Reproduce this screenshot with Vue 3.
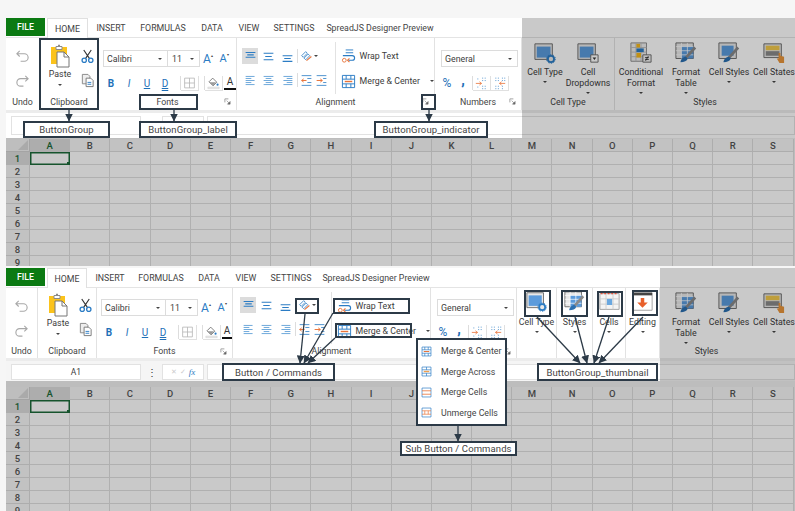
<template>
  <div class="page">
    <!-- icon sprite -->
    <svg class="sprite" aria-hidden="true">
      <symbol id="undo" viewBox="0 0 16 16"><path d="M5 2 2 5l3 3M2 5h8a4 4 0 0 1 0 8H6" fill="none" stroke="#a8a8a8" stroke-width="1.2"/></symbol>
      <symbol id="redo" viewBox="0 0 16 16"><path d="M11 3l3 3-3 3M14 6H6a4 4 0 0 0 0 8h3" fill="none" stroke="#a8a8a8" stroke-width="1.2"/></symbol>
      <symbol id="paste" viewBox="0 0 20 24">
        <path d="M1 3h16v17H1z" fill="#fbc31c"/>
        <path d="M6 2.5h6v3H6z" fill="#fff" stroke="#8a8a8a"/><path d="M8 .7h2v2H8z" fill="#8a8a8a"/>
        <path d="M7 8h7l5 5v10H7z" fill="#fff" stroke="#777"/><path d="M14 8v5h5" fill="none" stroke="#777"/>
      </symbol>
      <symbol id="cut" viewBox="0 0 16 16">
        <path d="M4 1l6 9M12 1 6 10" stroke="#333" stroke-width="1.2" fill="none"/>
        <circle cx="4.5" cy="12" r="2.3" fill="none" stroke="#2b7cc4" stroke-width="1.4"/>
        <circle cx="11.5" cy="12" r="2.3" fill="none" stroke="#2b7cc4" stroke-width="1.4"/>
      </symbol>
      <symbol id="copy" viewBox="0 0 16 16">
        <path d="M2.5 1.5h6l2 2v8h-8z" fill="#eee" stroke="#888"/>
        <path d="M6.5 5.5h5l2.5 2.5v6.500h-7.500z" fill="#fff" stroke="#777"/>
        <path d="M8 10h4M8 12h4" stroke="#2b7cc4"/>
      </symbol>
      <symbol id="borders" viewBox="0 0 16 16"><path d="M2 2h12v12H2zM8 2v12M2 8h12" fill="none" stroke="#b5b5b5"/></symbol>
      <symbol id="fill" viewBox="0 0 16 16"><path d="M7 2l5 5-4.500 4.500-5-5z" fill="#fff" stroke="#666"/><path d="M3 7h8L7.500 11z" fill="#999"/><path d="M1 13h14v2H1z" fill="#e8e8e8" stroke="#ccc" stroke-width=".5"/><circle cx="13" cy="10" r="1.300" fill="#2b7cc4"/></symbol>
      <symbol id="a-top" viewBox="0 0 16 16"><path d="M2 3h12M4 6h8M2 9h12" stroke="#2b7cc4" stroke-width="1.300"/></symbol>
      <symbol id="a-mid" viewBox="0 0 16 16"><path d="M2 4h12M4 8h8M2 12h12" stroke="#2b7cc4" stroke-width="1.300"/></symbol>
      <symbol id="a-bot" viewBox="0 0 16 16"><path d="M2 7h12M4 10.500h8M2 14h12" stroke="#2b7cc4" stroke-width="1.300"/></symbol>
      <symbol id="a-left" viewBox="0 0 16 16"><path d="M2 3h11M2 5.500h7M2 8h11M2 10.500h7M2 13h11" stroke="#5f9fd6" stroke-width="1.100"/></symbol>
      <symbol id="a-center" viewBox="0 0 16 16"><path d="M2 3h12M4.500 5.500h7M2 8h12M4.500 10.500h7M2 13h12" stroke="#5f9fd6" stroke-width="1.100"/></symbol>
      <symbol id="a-right" viewBox="0 0 16 16"><path d="M3 3h11M7 5.500h7M3 8h11M7 10.500h7M3 13h11" stroke="#5f9fd6" stroke-width="1.100"/></symbol>
      <symbol id="orient" viewBox="0 0 16 16"><path d="M2 7l5-5 2 2-5 5zM5 10l5-5 2 2-5 5z" fill="none" stroke="#2b7cc4"/><path d="M8 13l6-5" stroke="#e8743b" stroke-width="1.400"/></symbol>
      <symbol id="outdent" viewBox="0 0 16 16"><path d="M2 2h12M9 5.500h5M9 10.500h5M2 14h12" stroke="#2b7cc4"/><path d="M8 8H2M4.500 6 2 8l2.500 2" fill="none" stroke="#e8743b" stroke-width="1.200"/></symbol>
      <symbol id="indent" viewBox="0 0 16 16"><path d="M2 2h12M10 5.500h4M10 10.500h4M2 14h12" stroke="#2b7cc4"/><path d="M2 8h7M6.500 6 9 8l-2.500 2" fill="none" stroke="#e8743b" stroke-width="1.200"/></symbol>
      <symbol id="wrap" viewBox="0 0 16 16"><path d="M5 1h8M5 4h8" stroke="#2b7cc4"/><path d="M2 7h10a2 2 0 0 1 0 5H8" fill="none" stroke="#2b7cc4" stroke-width="1.200"/><path d="M9 10l-2 2 2 2" fill="none" stroke="#e8743b" stroke-width="1.200"/><circle cx="3.500" cy="12" r="2" fill="none" stroke="#e8743b"/></symbol>
      <symbol id="m-center" viewBox="0 0 16 16"><path d="M1.500 1.500h13v13h-13zM1.500 5.500h13M1.500 10.500h13M5.500 1.500v4M10.500 1.500v4M5.500 10.500v4M10.500 10.500v4" fill="none" stroke="#2b7cc4"/><path d="M4 8h8" stroke="#e8743b" stroke-width="1.500"/></symbol>
      <symbol id="m-across" viewBox="0 0 16 16"><path d="M1.500 1.500h13v13h-13zM1.500 5.500h13M1.500 10.500h13M8 1.500v4M8 10.500v4" fill="none" stroke="#2b7cc4"/><path d="M4 8h8" stroke="#f0a050" stroke-width="2"/></symbol>
      <symbol id="m-cells" viewBox="0 0 16 16"><path d="M1.500 1.500h13v13h-13z" fill="none" stroke="#2b7cc4"/><path d="M1.500 5.500h13M1.500 10.500h13" stroke="#e8743b" stroke-width="1.200"/></symbol>
      <symbol id="m-split" viewBox="0 0 16 16"><path d="M1.500 1.500h13v13h-13z" fill="none" stroke="#2b7cc4"/><path d="M1.500 5.500h13M1.500 10.500h13M5.500 5.500v5M10.500 5.500v5" fill="none" stroke="#e8743b"/></symbol>
      <symbol id="dec-up" viewBox="0 0 16 16"><path d="M9 2h1M12 2h1M9 5h1M12 5h1M9 12h1M12 12h1M9 15h1M12 15h1" stroke="#2b7cc4" stroke-width="1.100"/><path d="M1 8.500h7M5.500 6.500 8 8.500l-2.500 2" fill="none" stroke="#e8743b"/><path d="M3 3h1M3 13h1" stroke="#2b7cc4" stroke-width="1.100"/></symbol>
      <symbol id="dec-down" viewBox="0 0 16 16"><path d="M3 2h1M6 2h1M11 2h1M14 2h1M3 5h1M6 5h1M11 5h1M14 5h1M3 12h1M6 12h1M11 12h1M3 15h1M6 15h1M11 15h1" stroke="#2b7cc4" stroke-width="1.100"/><path d="M15 8.500H8M10.500 6.500 8 8.500l2.500 2" fill="none" stroke="#e8743b"/></symbol>
      <symbol id="indicator" viewBox="0 0 8 8"><path d="M1 1h4M1 1v4" stroke="#999" fill="none"/><path d="M3 3l3.500 3.500M7 4v3H4z" stroke="#666" fill="#666" stroke-width=".6"/></symbol>

      <symbol id="cell-type" viewBox="0 0 24 24">
        <path d="M1 2h19v17H1z" fill="#e8e8e8" stroke="#666"/><path d="M3 5h15v12H3z" fill="#5b9bdc"/>
        <circle cx="18.500" cy="18.500" r="3.400" fill="#e8e8e8" stroke="#2b7cc4" stroke-width="2"/><circle cx="18.500" cy="18.500" r="4.800" fill="none" stroke="#2b7cc4" stroke-width="1" stroke-dasharray="1.500 1.500"/>
      </symbol>
      <symbol id="cell-drop" viewBox="0 0 24 24">
        <path d="M1 2h19v17H1z" fill="#e8e8e8" stroke="#666"/><path d="M3 5h15v12H3z" fill="#5b9bdc"/>
        <path d="M15 14h8v8h-8z" fill="#fff" stroke="#666"/><path d="M17 17h4l-2 2.500z" fill="#333"/>
      </symbol>
      <symbol id="cond" viewBox="0 0 24 24">
        <path d="M1 1h17v20H1z" fill="#eee" stroke="#888"/><path d="M1 6h17M1 11h17M1 16h17M6.500 1v20M12 1v20" stroke="#bbb" fill="none"/>
        <path d="M7 2h4v4H7z" fill="#f5b81c"/><path d="M7 7h8v4H7z" fill="#2b7cc4"/><path d="M7 12h5v5H7z" fill="#f5b81c"/>
        <path d="M14 14h9v8h-9z" fill="#f2f2f2" stroke="#666"/><path d="M16.500 17h4M16.500 19h4M20 15.500l-3 5" stroke="#333"/>
      </symbol>
      <symbol id="fmt-table" viewBox="0 0 24 24">
        <path d="M1 1h19v17H1z" fill="#e8e8e8" stroke="#666"/><path d="M7 5h13v13H7z" fill="#5b9bdc"/>
        <path d="M1 5h19M1 9.500h19M1 14h19M7 1v17M13.500 1v17" stroke="#fff" stroke-width=".8" fill="none"/>
        <path d="M22 6 12 17" stroke="#8a8a8a" stroke-width="3"/><path d="M6 22c0-3 3-6 6-6l2 2c-1 3-4 4-8 4z" fill="#2b6fb0"/>
      </symbol>
      <symbol id="cell-styles" viewBox="0 0 24 24">
        <path d="M1 1h19v17H1z" fill="#e8e8e8" stroke="#666"/><path d="M4 4h13v11H4z" fill="#5b9bdc"/>
        <path d="M22 6 12 17" stroke="#8a8a8a" stroke-width="3"/><path d="M6 22c0-3 3-6 6-6l2 2c-1 3-4 4-8 4z" fill="#2b6fb0"/>
      </symbol>
      <symbol id="cell-states" viewBox="0 0 24 24">
        <path d="M1 2h19v15H1z" fill="#e8e8e8" stroke="#666"/><path d="M3 4h15v5H3z" fill="#f2c94c"/><path d="M3 10h15v5H3z" fill="#8a8a8a"/>
        <path d="M17 12v6h-2l3 5h5v-7l-4-1v-3z" fill="#e8953b"/>
      </symbol>
      <symbol id="cells" viewBox="0 0 24 24">
        <path d="M1 3h22v18H1z" fill="#f4f4f4" stroke="#999"/><path d="M1 9h22M1 15h22M8 3v18M16 3v18" stroke="#ccc" fill="none"/>
        <path d="M2 3h20" stroke="#e8533b" stroke-width="1.500" stroke-dasharray="2 2"/><path d="M9 9h6v7H9z" fill="#6aa8e0"/>
      </symbol>
      <symbol id="editing" viewBox="0 0 24 24">
        <path d="M1 2h22v20H1z" fill="#fff" stroke="#999"/><path d="M1 2h22v3H1z" fill="#444"/>
        <path d="M10 8h4v5h4l-6 6-6-6h4z" fill="#e8602b"/>
      </symbol>
    </svg>

    <section v-for="p in panels" :key="p.id" class="designer" :class="p.id">
      <div class="tabs">
        <span class="tab file">FILE</span>
        <span
          v-for="(t, i) in tabs"
          :key="t"
          class="tab"
          :class="{ active: i === 0 }"
          :style="{ width: p.tabWidths[i] + 'px' }"
        >{{ t }}</span>
      </div>

      <div class="ribbon">
        <div class="group g-undo">
          <div class="body">
            <svg class="ic"><use href="#undo" /></svg>
            <svg class="ic"><use href="#redo" /></svg>
          </div>
          <div class="label">Undo</div>
        </div>

        <div class="group g-clip">
          <div class="body">
            <div class="paste">
              <svg class="ic-paste"><use href="#paste" /></svg>
              <span>Paste</span>
              <i class="caret" />
            </div>
            <div class="clip-side">
              <svg class="ic"><use href="#cut" /></svg>
              <svg class="ic"><use href="#copy" /></svg>
            </div>
          </div>
          <div class="label">Clipboard</div>
        </div>

        <div class="group g-fonts">
          <div class="body">
            <div class="row">
              <div class="combo font-name">Calibri<i class="caret" /></div>
              <div class="combo font-size">11<i class="caret" /></div>
              <span class="grow big">A<sup>▴</sup></span>
              <span class="grow">A<sup>▾</sup></span>
            </div>
            <div class="row row2">
              <b class="fmt">B</b>
              <em class="fmt">I</em>
              <u class="fmt">U</u>
              <u class="fmt dbl">D</u>
              <i class="sep" />
              <svg class="ic cell"><use href="#borders" /></svg>
              <i class="sep" />
              <svg class="ic cell"><use href="#fill" /></svg>
              <span class="font-color">A</span>
            </div>
          </div>
          <div class="label">Fonts<svg class="indicator"><use href="#indicator" /></svg></div>
        </div>

        <div class="group g-align">
          <div class="body">
            <div class="align-left">
              <div class="row">
                <span class="btn on"><svg class="ic"><use href="#a-top" /></svg></span>
                <span class="btn"><svg class="ic"><use href="#a-mid" /></svg></span>
                <span class="btn"><svg class="ic"><use href="#a-bot" /></svg></span>
                <i class="sep" />
                <span class="btn orient"><svg class="ic"><use href="#orient" /></svg></span>
                <i class="caret" />
              </div>
              <div class="row">
                <span class="btn"><svg class="ic"><use href="#a-left" /></svg></span>
                <span class="btn"><svg class="ic"><use href="#a-center" /></svg></span>
                <span class="btn"><svg class="ic"><use href="#a-right" /></svg></span>
                <i class="sep" />
                <span class="btn ind"><svg class="ic"><use href="#outdent" /></svg></span>
                <span class="btn ind"><svg class="ic"><use href="#indent" /></svg></span>
              </div>
            </div>
            <div class="align-right">
              <div class="wide-btn"><svg class="ic"><use href="#wrap" /></svg>Wrap Text</div>
              <div class="wide-btn"><svg class="ic"><use href="#m-center" /></svg>Merge &amp; Center<i class="caret" /></div>
            </div>
          </div>
          <div class="label">Alignment<svg class="indicator"><use href="#indicator" /></svg></div>
        </div>

        <div class="group g-num">
          <div class="body">
            <div class="combo general">General<i class="caret" /></div>
            <div class="row row2">
              <span class="fmt pct">%</span>
              <b class="fmt comma">,</b>
              <i class="sep" />
              <svg class="ic cell"><use href="#dec-up" /></svg>
              <svg class="ic cell"><use href="#dec-down" /></svg>
            </div>
          </div>
          <div class="label">Numbers<svg class="indicator"><use href="#indicator" /></svg></div>
        </div>

        <template v-if="p.id === 'full'">
          <div class="group g-celltype">
            <div class="body">
              <div v-for="b in cellTypeBtns" :key="b.icon" class="big-btn" :style="{ width: b.w + 'px' }">
                <svg class="ic-big"><use :href="'#' + b.icon" /></svg>
                <span v-for="line in b.lines" :key="line">{{ line }}</span>
                <i class="caret" />
              </div>
            </div>
            <div class="label">Cell Type</div>
          </div>
        </template>
        <template v-else>
          <div v-for="g in collapsed" :key="g.text" class="group g-thumb" :style="{ width: g.w + 'px' }">
            <div class="body">
              <div class="big-btn">
                <svg class="ic-big"><use :href="'#' + g.icon" /></svg>
                <span>{{ g.text }}</span>
                <i class="caret" />
              </div>
            </div>
          </div>
        </template>

        <div class="group g-styles">
          <div class="body">
            <div
              v-for="b in p.styleBtns"
              :key="b.icon"
              class="big-btn"
              :style="{ width: b.w + 'px' }"
            >
              <svg class="ic-big"><use :href="'#' + b.icon" /></svg>
              <span v-for="line in b.lines" :key="line">{{ line }}</span>
              <i class="caret" />
            </div>
          </div>
          <div class="label">Styles</div>
        </div>
      </div>

      <div class="formula">
        <div class="name-box">A1</div>
        <span class="dots">⋮</span>
        <div class="fx-box"><span class="x">✕</span><span class="x">✓</span><em>fx</em></div>
        <div class="input" />
      </div>

      <div class="grid">
        <div class="corner"><i /></div>
        <div v-for="c in columns" :key="c" class="col-head" :class="{ cur: c === 'A' }">{{ c }}</div>
        <template v-for="r in rows" :key="r">
          <div class="row-head" :class="{ cur: r === 1 }">{{ r }}</div>
          <div v-for="c in columns" :key="c" class="cell" :class="{ sel: r === 1 && c === 'A' }" />
        </template>
      </div>

      <div class="shade shade-top" />
      <div class="shade shade-grid" />
    </section>

    <!-- annotations drawn over the two screenshots -->
    <div v-for="c in callouts" :key="c.x + '-' + c.y" class="callout" :class="{ frame: !c.text }" :style="boxStyle(c)">{{ c.text }}</div>

    <div class="sub-menu">
      <div v-for="m in mergeItems" :key="m.text" class="sub-item">
        <svg class="ic"><use :href="'#' + m.icon" /></svg>{{ m.text }}
      </div>
    </div>

    <svg class="arrows" width="795" height="511">
      <defs>
        <marker id="head" viewBox="0 0 8 8" refX="7.500" refY="4" markerWidth="8" markerHeight="8" markerUnits="userSpaceOnUse" orient="auto">
          <path d="M0 0 8 4 0 8z" fill="#2c3a47" />
        </marker>
      </defs>
      <line
        v-for="a in arrows"
        :key="a.join()"
        :x1="a[0]"
        :y1="a[1]"
        :x2="a[2]"
        :y2="a[3]"
        stroke="#2c3a47"
        stroke-width="1.300"
        marker-end="url(#head)"
      />
    </svg>
  </div>
</template>

<script setup>
const tabs = ['HOME', 'INSERT', 'FORMULAS', 'DATA', 'VIEW', 'SETTINGS', 'SpreadJS Designer Preview']
const columns = 'ABCDEFGHIJKLMNOPQRS'.split('')
const rows = [1, 2, 3, 4, 5, 6, 7, 8, 9]

const cellTypeBtns = [
  { icon: 'cell-type', w: 44, lines: ['Cell Type'] },
  { icon: 'cell-drop', w: 42, lines: ['Cell', 'Dropdowns'] },
]

const formatBtn = { icon: 'fmt-table', w: 38, lines: ['Format', 'Table'] }
const cellStylesBtn = { icon: 'cell-styles', w: 48, lines: ['Cell Styles'] }
const cellStatesBtn = { icon: 'cell-states', w: 42, lines: ['Cell States'] }

const panels = [
  {
    id: 'full',
    tabWidths: [41, 46, 58, 40, 34, 56, 116],
    styleBtns: [{ icon: 'cond', w: 52, lines: ['Conditional', 'Format'] }, formatBtn, cellStylesBtn, cellStatesBtn],
  },
  {
    id: 'narrow',
    tabWidths: [40, 46, 56, 40, 34, 56, 114],
    styleBtns: [formatBtn, cellStylesBtn, cellStatesBtn],
  },
]

const collapsed = [
  { text: 'Cell Type', icon: 'cell-type', w: 40 },
  { text: 'Styles', icon: 'fmt-table', w: 36 },
  { text: 'Cells', icon: 'cells', w: 33 },
  { text: 'Editing', icon: 'editing', w: 34 },
]

const mergeItems = [
  { text: 'Merge & Center', icon: 'm-center' },
  { text: 'Merge Across', icon: 'm-across' },
  { text: 'Merge Cells', icon: 'm-cells' },
  { text: 'Unmerge Cells', icon: 'm-split' },
]

const callouts = [
  { x: 39, y: 38, w: 60, h: 72 },
  { x: 139, y: 94, w: 59, h: 16 },
  { x: 421, y: 94, w: 15, h: 16 },
  { x: 23, y: 121, w: 87, h: 17, text: 'ButtonGroup' },
  { x: 139, y: 121, w: 98, h: 17, text: 'ButtonGroup_label' },
  { x: 374, y: 121, w: 114, h: 17, text: 'ButtonGroup_indicator' },
  { x: 295, y: 298, w: 24, h: 16 },
  { x: 333, y: 298, w: 77, h: 16 },
  { x: 335, y: 323, w: 77, h: 15 },
  { x: 524, y: 290, w: 27, h: 27 },
  { x: 561, y: 290, w: 27, h: 27 },
  { x: 597, y: 291, w: 26, h: 26 },
  { x: 632, y: 290, w: 26, h: 26 },
  { x: 222, y: 363, w: 113, h: 18, text: 'Button / Commands' },
  { x: 537, y: 363, w: 121, h: 18, text: 'ButtonGroup_thumbnail' },
  { x: 400, y: 441, w: 117, h: 15, text: 'Sub Button / Commands' },
]

const arrows = [
  [69, 110, 69, 121],
  [174, 110, 174, 121],
  [429, 110, 429, 121],
  [305, 314, 300, 363],
  [333, 313, 304, 363],
  [335, 338, 308, 363],
  [537, 317, 580, 363],
  [575, 317, 587, 363],
  [609, 317, 594, 363],
  [643, 317, 599, 363],
  [458, 426, 458, 441],
]

function boxStyle(c) {
  return { left: c.x + 'px', top: c.y + 'px', width: c.w + 'px', height: c.h + 'px' }
}
</script>

<style>
html,
body {
  margin: 0;
  overflow: hidden;
}
</style>

<style scoped>
.page {
  position: relative;
  width: 795px;
  height: 511px;
  overflow: hidden;
  background: #f6f6f6;
  padding-top: 18px;
  box-sizing: border-box;
  font-family: Roboto, "Noto Sans", sans-serif;
  font-size: 8.5px;
  color: #3c3c3c;
}

.sprite {
  position: absolute;
  width: 0;
  height: 0;
}

.designer {
  position: relative;
  margin-left: 6px;
  height: 248px;
  overflow: hidden;
  background: #fff;
}

.designer.narrow {
  margin-top: 2px;
  height: 243px;
}

/* tabs */
.tabs {
  display: flex;
  height: 20px;
  background: #fff;
  border-bottom: 1px solid #e4e4e4;
  box-sizing: border-box;
}

.tab {
  display: flex;
  align-items: center;
  justify-content: center;
  flex: none;
  font-size: 8.8px;
  color: #444;
  white-space: nowrap;
}

.tab.file {
  width: 39px;
  margin-right: 2px;
  height: 18px;
  background: #0b7a12;
  color: #fff;
  font-weight: 500;
}

.tab.active {
  height: 20px;
  background: #fff;
  border: 1px solid #e0e0e0;
  border-bottom: 0;
  box-sizing: border-box;
}

/* ribbon */
.ribbon {
  display: flex;
  height: 72px;
  background: #fff;
  border-bottom: 3px solid #ececec;
}

.narrow .ribbon {
  height: 70px;
}

.group {
  display: flex;
  flex-direction: column;
  flex: none;
  box-sizing: border-box;
  border-right: 1px solid #e2e2e2;
}

.body {
  height: 56px;
  box-sizing: border-box;
  display: flex;
}

.label {
  position: relative;
  flex: 1;
  display: flex;
  align-items: center;
  justify-content: center;
  font-size: 8.8px;
  color: #444;
}

.indicator {
  position: absolute;
  right: 5px;
  top: 4px;
  width: 7px;
  height: 7px;
}

.ic {
  width: 15px;
  height: 15px;
  flex: none;
}

.caret {
  display: inline-block;
  width: 0;
  height: 0;
  border: 2px solid transparent;
  border-top: 2.500px solid #444;
  border-bottom: 0;
  flex: none;
}

.row {
  display: flex;
  align-items: center;
}

.sep {
  width: 1px;
  height: 14px;
  background: #ddd;
  flex: none;
}

.g-undo {
  width: 34px;
}

.narrow .g-undo {
  width: 32px;
}

.g-undo .body {
  flex-direction: column;
  align-items: center;
  padding-top: 11px;
  gap: 9px;
}

.g-clip {
  width: 59px;
}

.g-clip .body {
  padding-top: 6px;
}

.narrow .g-clip .body {
  padding-top: 5px;
}

.paste {
  width: 40px;
  display: flex;
  flex-direction: column;
  align-items: center;
  font-size: 8.8px;
}

.ic-paste {
  width: 20px;
  height: 24px;
  margin-bottom: 1px;
  flex: none;
}

.paste .caret {
  margin-top: 5px;
}

.clip-side {
  display: flex;
  flex-direction: column;
  gap: 9px;
  padding-top: 5px;
}

.g-fonts {
  width: 138px;
}

.narrow .g-fonts {
  width: 136px;
}

.g-fonts .body {
  flex-direction: column;
  padding: 12px 0 0 4px;
}

.narrow .g-fonts .body {
  padding-top: 11px;
}

.combo {
  display: flex;
  align-items: center;
  justify-content: space-between;
  height: 17px;
  box-sizing: border-box;
  padding: 0 5px 0 3px;
  border: 1px solid #dcdcdc;
  font-size: 8.8px;
}

.font-name {
  width: 65px;
}

.font-size {
  width: 33px;
  margin-left: -1px;
  padding-left: 4px;
}

.grow {
  width: 16px;
  text-align: center;
  color: #2b7cc4;
  font-size: 11px;
  line-height: 1;
}

.grow.big {
  font-size: 12px;
}

.grow sup {
  font-size: 4px;
  color: #444;
  vertical-align: 6px;
  line-height: 0;
}

.row2 {
  margin-top: 8px;
  height: 16px;
}

.fmt {
  width: 18px;
  margin-left: -1px;
  margin-right: 1px;
  text-align: center;
  flex: none;
  font-size: 10px;
  color: #1e6fb8;
}

.fmt.dbl {
  text-decoration-style: double;
}

.ic.cell {
  width: 18px;
  padding: 0 2px;
  box-sizing: border-box;
}

.row2 .sep {
  margin-left: 5px;
}

.font-color {
  width: 14px;
  text-align: center;
  font-size: 10px;
  color: #333;
  border-bottom: 2px solid #111;
  line-height: 12px;
  margin-left: 1px;
}

.g-align {
  width: 198px;
}

.g-align .body {
  padding-top: 4px;
}

.align-left {
  width: 99px;
  height: 52px;
  box-sizing: border-box;
  padding: 6px 0 0 4px;
  border-right: 1px solid #e2e2e2;
  display: flex;
  flex-direction: column;
  gap: 8px;
}

.narrow .align-left {
  padding-left: 6px;
  padding-top: 5px;
}

.btn {
  width: 18.500px;
  height: 16px;
  display: flex;
  align-items: center;
  justify-content: center;
  flex: none;
}

.btn .ic {
  width: 13px;
  height: 13px;
}

.btn.on {
  background: #dcdcdc;
  margin-left: 1px;
  margin-right: 1.500px;
  width: 16px;
}

.btn.orient {
  width: 15px;
  margin-left: 1px;
}

.btn.ind {
  width: 15.500px;
  margin-left: 1px;
  margin-right: -1px;
}

.align-right {
  padding: 6px 0 0 5px;
  display: flex;
  flex-direction: column;
  gap: 9px;
}

.wide-btn {
  display: flex;
  align-items: center;
  gap: 4px;
  height: 16px;
  font-size: 8.8px;
  white-space: nowrap;
}

.wide-btn .caret {
  margin-left: 6px;
}

.g-num {
  width: 87px;
}

.narrow .g-num {
  width: 86px;
}

.g-num .body {
  flex-direction: column;
  padding: 12px 0 0 6px;
}

.narrow .g-num .body {
  padding-top: 11px;
}

.general {
  width: 77px;
}

.g-num .row2 {
  margin-left: -2px;
}

.fmt.pct {
  font-size: 12px;
  width: 16px;
  margin: 0;
}

.fmt.comma {
  font-size: 14px;
  width: 16px;
  margin: -6px 0 0;
  font-weight: 800;
}

.g-num .sep {
  margin-left: 1px;
}

.big-btn {
  display: flex;
  flex-direction: column;
  align-items: center;
  flex: none;
  line-height: 11px;
  font-size: 8.8px;
  white-space: nowrap;
}

.ic-big {
  width: 22px;
  height: 22px;
  margin-bottom: 3px;
  flex: none;
}

.big-btn .caret {
  margin-top: 3px;
}

.g-celltype {
  width: 93px;
}

.g-celltype .body,
.g-styles .body {
  padding-top: 4px;
}

.g-celltype .body {
  padding-left: 1px;
}

.g-styles {
  flex: 1;
  border-right: 0;
}

.narrow .g-styles .body {
  padding-left: 7px;
}

.narrow .g-styles .label {
  padding-right: 42px;
}

.g-thumb .body {
  padding-top: 3px;
  justify-content: center;
}

.g-thumb .ic-big {
  width: 21px;
  height: 21px;
  margin-bottom: 5px;
}

.g-thumb .big-btn {
  width: 100%;
}

/* formula bar */
.formula {
  display: flex;
  align-items: center;
  height: 25px;
  padding: 3px 0 3px 5px;
  box-sizing: border-box;
  background: #fff;
}

.narrow .formula {
  height: 20px;
  padding: 3px 0 1px 5px;
  background: #f5f5f5;
}

.name-box,
.fx-box,
.input {
  height: 100%;
  box-sizing: border-box;
  background: #fff;
  border: 1px solid #e2e2e2;
  display: flex;
  align-items: center;
  justify-content: center;
}

.name-box {
  width: 130px;
}

.dots {
  width: 21px;
  text-align: center;
  font-size: 10px;
  color: #333;
}

.fx-box {
  width: 42px;
  gap: 3px;
  font-size: 7px;
  color: #ccc;
}

.fx-box em {
  color: #2b7cc4;
  font-family: "Liberation Serif", serif;
  font-size: 9px;
}

.input {
  flex: 1;
  margin-left: 3px;
}

/* sheet */
.grid {
  display: grid;
  grid-template-columns: 24px repeat(19, 40.200px);
  grid-auto-rows: 13px;
  padding-top: 1px;
  background: #f0f0f0;
}

.narrow .grid {
  padding-top: 6px;
}

.corner {
  position: relative;
  background: #f2f2f2;
  border-right: 1px solid #d0d0d0;
  border-bottom: 1px solid #d0d0d0;
}

.corner i {
  position: absolute;
  right: 1px;
  bottom: 1px;
  width: 10px;
  height: 10px;
  background: #d8d8d8;
  clip-path: polygon(100% 0, 100% 100%, 0 100%);
}

.col-head,
.row-head {
  display: flex;
  align-items: center;
  justify-content: center;
  box-sizing: border-box;
  background: #f6f6f6;
  border-right: 1px solid #dcdcdc;
  border-bottom: 1px solid #dcdcdc;
  font-size: 9.5px;
  font-weight: 500;
  color: #555;
}

.col-head.cur,
.row-head.cur {
  background: #dcdcdc;
  color: #1c6b3a;
}

.cell {
  position: relative;
  box-sizing: border-box;
  background: #fff;
  border-right: 1px solid #e0e0e0;
  border-bottom: 1px solid #e0e0e0;
}

.cell.sel {
  border: 1px solid #1c6b3a;
  box-shadow: inset 0 0 0 0.500px #1c6b3a;
}

.cell.sel::after {
  content: "";
  position: absolute;
  right: -2px;
  bottom: -2px;
  width: 4px;
  height: 4px;
  background: #1c6b3a;
}

.shade {
  position: absolute;
  background: rgba(0, 0, 0, 0.21);
}

.shade-top {
  top: 0;
  right: 0;
  left: 516px;
  height: 120px;
}

.shade-grid {
  top: 120px;
  left: 0;
  right: 0;
  bottom: 0;
}

.narrow .shade-top {
  left: 654px;
  height: 113px;
}

.narrow .shade-grid {
  top: 113px;
}

/* annotations */
.callout {
  position: absolute;
  box-sizing: border-box;
  display: flex;
  align-items: center;
  justify-content: center;
  background: #fff;
  border: 2px solid #2c3a47;
  font-size: 9.5px;
  letter-spacing: 0.1px;
  color: #444;
  white-space: nowrap;
  z-index: 2;
}

.callout.frame {
  background: none;
}

.sub-menu {
  position: absolute;
  left: 416px;
  top: 338px;
  width: 91px;
  height: 88px;
  box-sizing: border-box;
  padding: 1px 0 0 3px;
  background: #fff;
  border: 2px solid #2c3a47;
  display: flex;
  flex-direction: column;
  z-index: 2;
}

.sub-item {
  display: flex;
  align-items: center;
  gap: 9px;
  height: 20.500px;
  white-space: nowrap;
  font-size: 8.8px;
  color: #444;
}

.sub-item .ic {
  width: 11px;
  height: 11px;
}

.arrows {
  position: absolute;
  left: 0;
  top: 0;
  pointer-events: none;
  z-index: 3;
}
</style>
